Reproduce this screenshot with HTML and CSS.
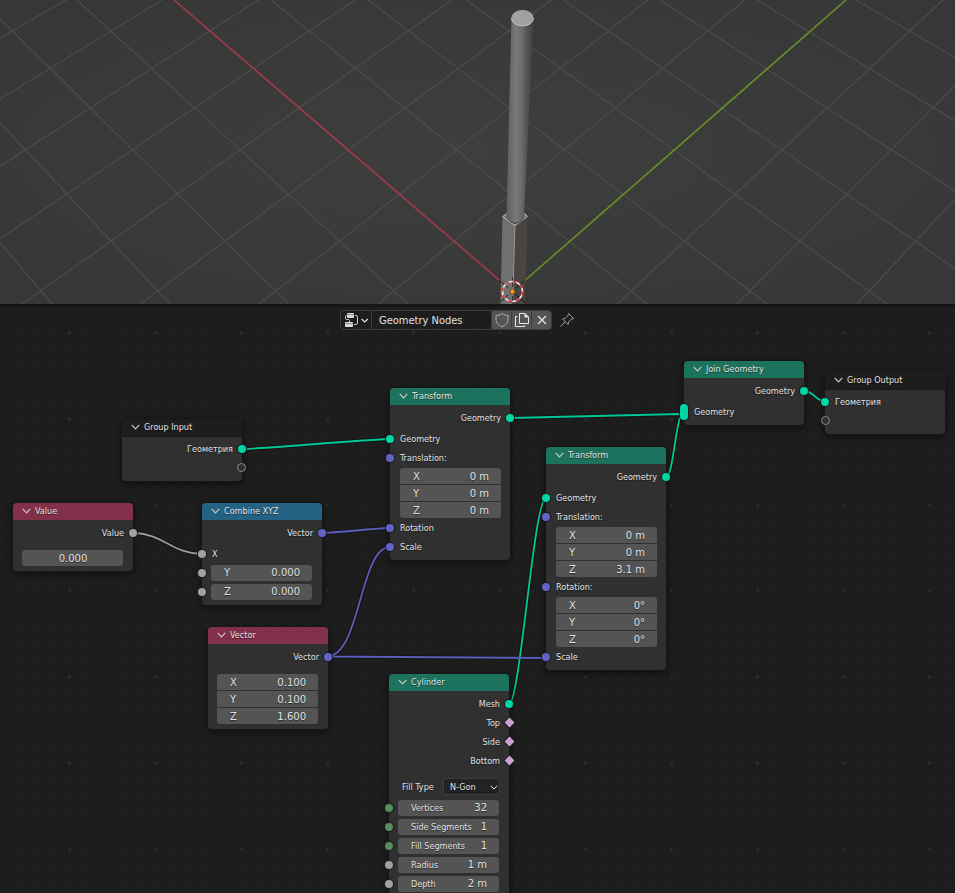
FILE: index.html
```html
<!DOCTYPE html>
<html lang="en">
<head>
<meta charset="utf-8">
<title>Geometry Nodes</title>
<link rel="stylesheet" href="styles.css">
</head>
<body>
<svg class="defs" aria-hidden="true">
  <symbol id="chevron" viewBox="0 0 9 6"><path d="M.7 .9 4.5 4.9 8.3 .9" fill="none" stroke="currentColor" stroke-width="1.2"/></symbol>
</svg>

<main class="app">
  <section class="viewport" aria-label="3D viewport">
    <svg class="scene" viewBox="0 0 955 304" preserveAspectRatio="xMidYMin slice">
      <defs>
        <radialGradient id="sky" cx=".5" cy=".5" r=".65"><stop offset="0" stop-color="#3e3e3e"/><stop offset="1" stop-color="#373737"/></radialGradient>
        <linearGradient id="tube" x1="0" x2="1" y1="0" y2="0.02"><stop offset="0" stop-color="#5c5e5e"/><stop offset=".35" stop-color="#787a7a"/><stop offset=".55" stop-color="#6e6e6e"/><stop offset=".75" stop-color="#575453"/><stop offset="1" stop-color="#423e3c"/></linearGradient>
      </defs>
      <rect width="955" height="304" fill="url(#sky)"/>
      <g stroke="#4a4a4a" stroke-width="1.4">
        <path d="M-206 0 52 304M-115 0 170 304M-19 0 289 304M77 0 408 304M271 0 647 304M368 0 767 304M466 0 887 304M563 0 1007 304M660 0 1130 304M757 0 1255 304M856 0 1379 304"/>
        <path d="M66 0 0 38M162 0 0 99M258 0-214 304M355 0-97 304M452 0 22 304M551 0 140 304M648 0 259 304M745 0 378 304M943 0 617 304M1041 0 737 304M1141 0 857 304"/>
      </g>
      <path d="M174 0 527 304" stroke="#a33a48" stroke-width="1.6"/>
      <path d="M846 0 498 304" stroke="#668f28" stroke-width="1.6"/>
      <path d="M502.500 216 515 225 512 304H500.500Z" fill="#6f7171"/>
      <path d="M515 225 527.500 216 525 304H512Z" fill="#4a4542"/>
      <path d="M503 216 507 213H524L527.500 216 515 226Z" fill="#686969"/>
      <path d="M515 225 512.500 304" stroke="#999" fill="none"/>
      <path d="M507 213.500 503 216.500 515 225.500 527 216.500 524.500 213.500" fill="none" stroke="#a8a8a8" stroke-width="1.200"/>
      <path d="M511.500 18 506.500 217Q515 230 524 217L533.500 18Z" fill="url(#tube)"/>
      <path d="M507 218Q515 229 524 218" fill="none" stroke="#333" stroke-width=".8"/>
      <ellipse cx="522.500" cy="18" rx="11" ry="8" fill="#a0a1a3"/>
      <path d="M511.500 18A11 8 0 0 0 533.500 18" fill="none" stroke="#c4c4c6"/>
      <path d="M499 280 508 287.500M516 295 527 304M524 281 516 288M508 295 498 304" stroke="#111" stroke-width=".9"/>
      <path d="M512.500 277V287M512.500 296V304" stroke="#222" stroke-width=".8"/>
      <circle cx="512.500" cy="291.500" r="10" fill="none" stroke="#eee" stroke-width="1.500"/>
      <circle cx="512.500" cy="291.500" r="10" fill="none" stroke="#e8262a" stroke-width="1.500" stroke-dasharray="3.930 3.930"/>
      <circle cx="512.500" cy="291.700" r="2.400" fill="#ff9a22" stroke="#5a3206" stroke-width=".6"/>
    </svg>
  </section>

  <section class="editor" aria-label="Node editor">
    <svg class="backdrop" width="100%" height="100%" aria-hidden="true">
      <defs>
        <pattern id="dots" x="68" y="27" width="86" height="86" patternUnits="userSpaceOnUse">
          <g stroke="#242424" stroke-width="2" stroke-dasharray="2 15.200">
            <path d="M0 2H86M0 19H86M0 36H86M0 53H86M0 71H86"/>
          </g>
          <path d="M0 2H3" stroke="#2a2a2a" stroke-width="3"/>
        </pattern>
      </defs>
      <rect width="100%" height="100%" fill="url(#dots)"/>
    </svg>

    <header class="toolbar">
      <div class="datablock">
        <button class="browse" aria-label="Browse node trees">
          <svg width="26" height="16" viewBox="0 0 26 16" fill="none" stroke="#e0e0e0">
            <rect x="4" y="1" width="7" height="5" rx="1" fill="#e0e0e0" stroke="none"/><path d="M4 2.700H11" stroke="#1d1d1d" stroke-width=".5"/>
            <rect x="2" y="10" width="8" height="5" rx="1" fill="#e0e0e0" stroke="none"/><path d="M2 11.700H10" stroke="#1d1d1d" stroke-width=".5"/>
            <path d="M12 3.500h1q1.500 0 1.500 1.500v6q0 1.500-1.500 1.500H11M3.500 3.500Q2.500 3.500 2.500 4.500V6.500Q2.500 7.500 3.500 7.500H5.500Q6.500 7.500 6.500 8.500V10" stroke-width=".9"/>
            <path d="M18.500 7l3.200 3 3.200-3" stroke-width="1.200"/>
          </svg>
        </button>
        <input class="tree-name" aria-label="Node tree name" value="Geometry Nodes">
        <button class="tool" aria-label="Fake user">
          <svg width="16" height="16" viewBox="0 0 16 16" fill="none" stroke="#b0b0b0"><path d="M8 1.500C6 3 4 3.500 2 3.500V7c0 4 2.500 6.300 6 7.800 3.500-1.500 6-3.800 6-7.800V3.500C12 3.500 10 3 8 1.500Z"/></svg>
        </button>
        <button class="tool" aria-label="New node tree">
          <svg width="16" height="16" viewBox="0 0 16 16" fill="none" stroke="#e6e6e6"><path d="M5.500 1.500H11L14.500 5v6.500h-9ZM3.500 4.500h-2v10h9v-1.500"/><path d="M10.500 1v4.500h4.500Z" fill="#e6e6e6" stroke="none"/></svg>
        </button>
        <button class="tool" aria-label="Unlink">
          <svg width="16" height="16" viewBox="0 0 16 16" stroke="#e6e6e6" stroke-width="1.200"><path d="m4 4 8 8M12 4l-8 8"/></svg>
        </button>
      </div>
      <button class="pin" aria-label="Pin">
        <svg width="16" height="16" viewBox="0 0 16 16" fill="none" stroke="#a0a0a0"><path d="M9.500 1.500 14.500 6.500 12.500 7 9.500 10 9 12.500 3.500 7 6 6.500 9 3.500ZM6.200 9.800 1.500 14.500"/></svg>
      </button>
    </header>

    <svg class="links" width="100%" height="100%" aria-hidden="true">
      <g transform="translate(0 -304)" fill="none" stroke-width="4" stroke="#151515">
        <path d="M242 449C290 447 342 441 390 439M133 533C163 533 172 554 202 554M322 533C344 532 368 529 390 528M328 656C360 656 360 547 390 547M328 656.500 546 658M510 418C570 417 630 415 680 414M667 477C673 472 675 430 681 414M804 390C812 391 817 401 825 402M509 704C520 704 534 498 546 498"/>
      </g>
      <g transform="translate(0 -304)" fill="none" stroke-width="1.800">
        <path stroke="#00c896" d="M242 449C290 447 342 441 390 439M510 418C570 417 630 415 680 414M667 477C673 472 675 430 681 414M804 390C812 391 817 401 825 402M509 704C520 704 534 498 546 498"/>
        <path stroke="#9a9a9a" d="M133 533C163 533 172 554 202 554"/>
        <path stroke="#5c5cba" d="M322 533C344 532 368 529 390 528M328 656C360 656 360 547 390 547M328 656.500 546 658"/>
      </g>
    </svg>

    <article class="node plain n-input">
      <button class="title"><svg class="chev"><use href="#chevron"/></svg>Group Input</button>
      <div class="row out">Геометрия<i class="sock geo"></i></div>
      <div class="row out"><i class="sock empty"></i></div>
    </article>

    <article class="node red n-value">
      <button class="title"><svg class="chev"><use href="#chevron"/></svg>Value</button>
      <div class="row out">Value<i class="sock num"></i></div>
      <div class="fields spaced"><label class="field"><input class="centred" aria-label="Value" value="0.000"></label></div>
    </article>

    <article class="node blue n-combine">
      <button class="title"><svg class="chev"><use href="#chevron"/></svg>Combine XYZ</button>
      <div class="row out">Vector<i class="sock vec"></i></div>
      <div class="row first">X<i class="sock num"></i></div>
      <div class="row entry"><label class="field solo axis"><span>Y</span><input value="0.000"></label><i class="sock num"></i></div>
      <div class="row entry"><label class="field solo axis"><span>Z</span><input value="0.000"></label><i class="sock num"></i></div>
    </article>

    <article class="node red n-vector">
      <button class="title"><svg class="chev"><use href="#chevron"/></svg>Vector</button>
      <div class="row out">Vector<i class="sock vec"></i></div>
      <div class="fields spaced">
        <label class="field axis"><span>X</span><input value="0.100"></label>
        <label class="field axis"><span>Y</span><input value="0.100"></label>
        <label class="field axis"><span>Z</span><input value="1.600"></label>
      </div>
    </article>

    <article class="node green n-transform-a">
      <button class="title"><svg class="chev"><use href="#chevron"/></svg>Transform</button>
      <div class="row out">Geometry<i class="sock geo"></i></div>
      <div class="row first">Geometry<i class="sock geo"></i></div>
      <div class="row">Translation:<i class="sock vec"></i></div>
      <div class="fields">
        <label class="field axis"><span>X</span><input value="0 m"></label>
        <label class="field axis"><span>Y</span><input value="0 m"></label>
        <label class="field axis"><span>Z</span><input value="0 m"></label>
      </div>
      <div class="row">Rotation<i class="sock vec"></i></div>
      <div class="row">Scale<i class="sock vec"></i></div>
    </article>

    <article class="node green n-transform-b">
      <button class="title"><svg class="chev"><use href="#chevron"/></svg>Transform</button>
      <div class="row out">Geometry<i class="sock geo"></i></div>
      <div class="row first">Geometry<i class="sock geo"></i></div>
      <div class="row">Translation:<i class="sock vec"></i></div>
      <div class="fields">
        <label class="field axis"><span>X</span><input value="0 m"></label>
        <label class="field axis"><span>Y</span><input value="0 m"></label>
        <label class="field axis"><span>Z</span><input value="3.1 m"></label>
      </div>
      <div class="row">Rotation:<i class="sock vec"></i></div>
      <div class="fields">
        <label class="field axis"><span>X</span><input value="0°"></label>
        <label class="field axis"><span>Y</span><input value="0°"></label>
        <label class="field axis"><span>Z</span><input value="0°"></label>
      </div>
      <div class="row">Scale<i class="sock vec"></i></div>
    </article>

    <article class="node green n-join">
      <button class="title"><svg class="chev"><use href="#chevron"/></svg>Join Geometry</button>
      <div class="row out">Geometry<i class="sock geo"></i></div>
      <div class="row first">Geometry<i class="sock geo multi"></i></div>
    </article>

    <article class="node plain n-output">
      <button class="title"><svg class="chev"><use href="#chevron"/></svg>Group Output</button>
      <div class="row">Геометрия<i class="sock geo"></i></div>
      <div class="row"><i class="sock empty"></i></div>
    </article>

    <article class="node green n-cylinder">
      <button class="title"><svg class="chev"><use href="#chevron"/></svg>Cylinder</button>
      <div class="row out">Mesh<i class="sock geo"></i></div>
      <div class="row out">Top<i class="sock mask"></i></div>
      <div class="row out">Side<i class="sock mask"></i></div>
      <div class="row out">Bottom<i class="sock mask"></i></div>
      <div class="row choice">
        <label for="fill">Fill Type</label>
        <span class="dropdown"><select id="fill"><option>N-Gon</option></select><svg class="arrow"><use href="#chevron"/></svg></span>
      </div>
      <div class="row entry first"><label class="field solo"><span>Vertices</span><input value="32"></label><i class="sock int"></i></div>
      <div class="row entry"><label class="field solo"><span>Side Segments</span><input value="1"></label><i class="sock int"></i></div>
      <div class="row entry"><label class="field solo"><span>Fill Segments</span><input value="1"></label><i class="sock int"></i></div>
      <div class="row entry"><label class="field solo"><span>Radius</span><input value="1 m"></label><i class="sock num"></i></div>
      <div class="row entry"><label class="field solo"><span>Depth</span><input value="2 m"></label><i class="sock num"></i></div>
    </article>
  </section>
</main>
</body>
</html>
```
FILE: styles.css
```css
* { box-sizing: border-box; }

body {
  margin: 0;
  background: #1d1d1d;
  color: #e2e2e2;
  font-family: "DejaVu Sans Condensed", "DejaVu Sans", sans-serif;
  font-stretch: condensed;
  font-size: 9px;
}

button, input, select {
  margin: 0;
  padding: 0;
  border: 0;
  background: none;
  color: inherit;
  font: inherit;
  text-shadow: inherit;
}

svg { display: block; }
.defs { position: absolute; width: 0; height: 0; }

.app { display: flex; flex-direction: column; height: 100vh; }
.viewport { flex: 0 0 304px; }
.scene { width: 100%; height: 100%; }

.editor {
  position: relative;
  flex: 1;
  overflow: hidden;
  box-shadow: inset 0 3px #161616;
}

.backdrop, .links { position: absolute; top: 0; left: 0; }
.backdrop { clip-path: inset(26px 0 0 0); }

/* Header */
.toolbar {
  position: relative;
  display: flex;
  justify-content: center;
  align-items: center;
  gap: 7px;
  padding: 6px 40px 0 0;
}

.datablock {
  display: flex;
  gap: 1px;
  height: 20px;
  border: 1px solid #3d3d3d;
  border-radius: 4px;
  background: #3d3d3d;
  overflow: hidden;
}

.browse {
  display: flex;
  align-items: center;
  justify-content: center;
  width: 30px;
  background: #1d1d1d;
}

.tree-name {
  width: 119px;
  padding: 0 7px;
  background: #1d1d1d;
  font-size: 11px;
}

.tool {
  display: flex;
  align-items: center;
  justify-content: center;
  width: 19px;
  background: #545454;
}

/* Nodes */
.node {
  position: absolute;
  width: 120px;
  padding-bottom: 4px;
  border-radius: 4px;
  background: #303030;
  box-shadow: 0 0 0 1px #171717, 0 2px 6px 1px rgba(0, 0, 0, .5);
  text-shadow: 0 1px 1px rgba(0, 0, 0, .5);
}

.n-input { left: 122px; top: 115px; }
.n-value { left: 13px; top: 199px; }
.n-combine { left: 202px; top: 199px; }
.n-vector { left: 208px; top: 323px; }
.n-transform-a { left: 390px; top: 84px; }
.n-transform-b { left: 546px; top: 143px; }
.n-join { left: 684px; top: 57px; }
.n-output { left: 825px; top: 68px; }
.n-cylinder { left: 389px; top: 370px; }

.title {
  display: flex;
  align-items: center;
  gap: 4px;
  width: 100%;
  height: 17px;
  margin-bottom: 3px;
  padding: 0 9px 2px;
  border-radius: 4px 4px 0 0;
}

.green .title { background: #1d725e; }
.red .title { background: #83314a; }
.blue .title { background: #246283; }
.plain .title { background: #1d1d1d; box-shadow: 0 1px #171717; }

.chev { width: 9px; height: 6px; margin-top: 1px; color: #c8c8c8; }

.row {
  position: relative;
  display: flex;
  align-items: center;
  height: 19px;
  padding: 0 9px 0 10px;
}

.row.out { justify-content: flex-end; padding-right: 9px; }
.row.first { margin-top: 2px; }
.row.entry { padding: 0 10px 0 9px; }

.fields {
  display: grid;
  gap: 1px;
  margin: 1px 9px 0 10px;
  border-radius: 3px;
  overflow: hidden;
}

.fields.spaced { margin: 8px 10px 1px 9px; }

.field {
  display: flex;
  flex: 1;
  align-items: center;
  height: 16px;
  padding: 0 12px 0 13px;
  background: #545454;
}

.field.solo { border-radius: 3px; }

.field input {
  flex: 1;
  width: 0;
  min-width: 0;
  text-align: right;
}

.axis span, .field input {
  font-family: "DejaVu Sans", sans-serif;
  font-stretch: normal;
  font-size: 10px;
}

.field input.centred { text-align: center; }

.choice { justify-content: space-between; margin-top: 7px; padding-left: 13px; }

.dropdown {
  position: relative;
  width: 57px;
  height: 17px;
  border: 1px solid #3d3d3d;
  border-radius: 3px;
  background: #232323;
}

.dropdown select {
  width: 100%;
  height: 100%;
  padding-left: 6px;
  appearance: none;
}

.arrow { position: absolute; right: 1px; top: 6px; width: 8px; height: 5px; pointer-events: none; }

/* Sockets sit centred on the node's edge */
.sock {
  position: absolute;
  left: -4px;
  width: 8px;
  height: 8px;
  border-radius: 4px;
  box-shadow: 0 0 0 1px #1a1a1a;
}

.out .sock { left: auto; right: -4px; }
.geo { background: #00d6a3; }
.vec { background: #6363c7; }
.num { background: #a1a1a1; }
.int { background: #598c5c; }
.empty { border: 1px solid #8a8a8a; background: #303030; width: 9px; height: 9px; border-radius: 5px; box-shadow: none; }
.multi { height: 16px; }

.mask {
  width: 7px;
  height: 7px;
  border-radius: 0;
  background: #cc9fd6;
  transform: rotate(45deg);
}
```
